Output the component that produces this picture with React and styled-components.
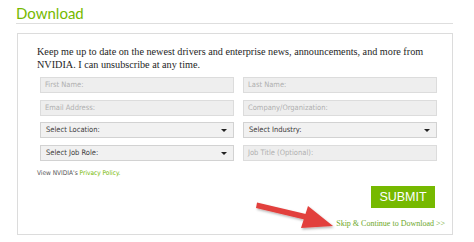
import React from "react";
import styled, { createGlobalStyle } from "styled-components";

const GlobalStyle = createGlobalStyle`
  html, body {
    margin: 0;
    padding: 0;
    background: #ffffff;
  }
`;

const Page = styled.div`
  position: relative;
  width: 474px;
  height: 242px;
  padding: 3px 21px 0 16px;
  box-sizing: border-box;
  overflow: hidden;
`;

const Title = styled.h2`
  margin: 0;
  font-family: Lato, "Open Sans", sans-serif;
  font-weight: 400;
  font-size: 15px;
  line-height: 20px;
  color: #76b900;
`;

const Rule = styled.div`
  height: 1px;
  background: #dedede;
`;

const FormBox = styled.div`
  position: relative;
  margin: 9px 0 0 1px;
  height: 202px;
  border: 1px solid #dcdcdc;
  box-sizing: border-box;
  padding: 11px 17px 0 19px;
`;

const Intro = styled.p`
  margin: 0;
  font-family: "Liberation Serif", "Times New Roman", serif;
  font-size: 10.2px;
  line-height: 13px;
  color: #1e1e1e;
`;

const Fields = styled.div`
  display: grid;
  grid-template-columns: 194px 194px;
  column-gap: 9px;
  row-gap: 6.5px;
  margin: 6px 0 0 3px;
`;

const Field = styled.div`
  position: relative;
  height: 16px;
  box-sizing: border-box;
  border: 1px solid ${(p) => (p.$select ? "#d2d2d2" : "#dcdcdc")};
  background: ${(p) => (p.$select ? "#f1f1f1" : "#eeeeee")};
  font-family: "DejaVu Sans Condensed", "DejaVu Sans", sans-serif;
  font-size: 7.5px;
  line-height: 14px;
  padding-left: ${(p) => (p.$select ? "5px" : "4px")};
  color: ${(p) => (p.$select ? "#3c3c3c" : "#b0b0b0")};
`;

const Caret = styled.span`
  position: absolute;
  right: 6px;
  top: 6px;
  width: 0;
  height: 0;
  border-left: 3px solid transparent;
  border-right: 3px solid transparent;
  border-top: 3px solid #222;
`;

const Privacy = styled.div`
  margin-top: 8px;
  font-family: "DejaVu Sans Condensed", "DejaVu Sans", sans-serif;
  font-size: 6.5px;
  color: #555;
`;

const PolicyLink = styled.span`
  color: #76b900;
`;

const Actions = styled.div`
  display: flex;
  flex-direction: column;
  align-items: flex-end;
  margin-top: 9px;
`;

const Submit = styled.button`
  width: 64px;
  height: 22px;
  border: none;
  background: #76b900;
  color: #ffffff;
  font-family: "Liberation Sans", Arial, sans-serif;
  font-size: 12.5px;
  padding: 0;
`;

const Skip = styled.div`
  margin-top: 11px;
  margin-right: -10px;
  font-family: "Liberation Serif", "Times New Roman", serif;
  font-size: 8px;
  color: #6ea82a;
`;

const Arrow = styled.svg`
  position: absolute;
  left: 236px;
  top: 166px;
`;

const fields = [
  { label: "First Name:" },
  { label: "Last Name:" },
  { label: "Email Address:" },
  { label: "Company/Organization:" },
  { label: "Select Location:", select: true },
  { label: "Select Industry:", select: true },
  { label: "Select Job Role:", select: true },
  { label: "Job Title (Optional):" },
];

export default function App() {
  return (
    <Page>
      <GlobalStyle />
      <Title>Download</Title>
      <Rule />
      <FormBox>
        <Intro>
          Keep me up to date on the newest drivers and enterprise news, announcements, and more from
          NVIDIA. I can unsubscribe at any time.
        </Intro>
        <Fields>
          {fields.map((f) => (
            <Field key={f.label} $select={f.select}>
              {f.label}
              {f.select && <Caret />}
            </Field>
          ))}
        </Fields>
        <Privacy>
          View NVIDIA's <PolicyLink>Privacy Policy.</PolicyLink>
        </Privacy>
        <Actions>
          <Submit>SUBMIT</Submit>
          <Skip>Skip &amp; Continue to Download &gt;&gt;</Skip>
        </Actions>
        <Arrow width="84" height="36" viewBox="0 0 84 36">
          <defs>
            <filter id="sh" x="-20%" y="-40%" width="140%" height="180%">
              <feDropShadow dx="1" dy="1.5" stdDeviation="1" floodColor="#000" floodOpacity="0.3" />
            </filter>
          </defs>
          <g filter="url(#sh)" fill="#e2403c">
            <path d="M3 2.5 L56 15 L54.5 20.5 L2 8 Z" />
            <path d="M54 6 L79 26 L47 28 Z" />
          </g>
        </Arrow>
      </FormBox>
    </Page>
  );
}
